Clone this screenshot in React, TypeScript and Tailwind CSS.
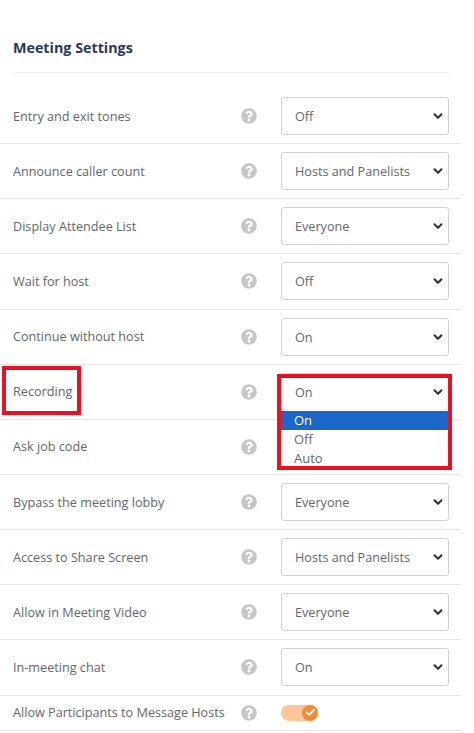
import { ChevronDown, Check } from 'lucide-react'
import { FaQuestionCircle } from 'react-icons/fa'

interface SettingRowProps {
  label: string
  value?: string
  open?: boolean
}

const rows: SettingRowProps[] = [
  { label: 'Entry and exit tones', value: 'Off' },
  { label: 'Announce caller count', value: 'Hosts and Panelists' },
  { label: 'Display Attendee List', value: 'Everyone' },
  { label: 'Wait for host', value: 'Off' },
  { label: 'Continue without host', value: 'On' },
  { label: 'Recording', value: 'On', open: true },
  { label: 'Ask job code' },
  { label: 'Bypass the meeting lobby', value: 'Everyone' },
  { label: 'Access to Share Screen', value: 'Hosts and Panelists' },
  { label: 'Allow in Meeting Video', value: 'Everyone' },
  { label: 'In-meeting chat', value: 'On' },
]

function SettingRow({ label, value, open }: SettingRowProps) {
  return (
    <div className="flex h-[55.15px] items-center border-b border-[#e6e6e6] pl-[13px] pr-[12px]">
      <div className="w-[228px] text-[12.65px] text-[#63676b]">{label}</div>
      <FaQuestionCircle className="h-4 w-4 text-[#c6c6c6]" />
      {value && (
        <div className="relative ml-6">
          <div className="flex h-[38px] w-[168px] items-center justify-between rounded-[3px] border border-[#d2d2d2] bg-white pl-[13px] pr-[3px] text-[12.65px] text-[#63676b]">
            <span className="pt-px">{value}</span>
            <ChevronDown className="h-[14px] w-[14px] text-[#333]" strokeWidth={3.5} />
          </div>
          {open && (
            <div className="absolute left-0 top-[37px] z-10 w-[167px] bg-white pt-px text-[13px] leading-[19px] text-[#63676b] shadow-[0_1px_3px_rgba(0,0,0,0.25)]">
              <div className="bg-[#1c66c9] pl-[13px] text-white">On</div>
              <div className="pl-[13px]">Off</div>
              <div className="pl-[13px]">Auto</div>
            </div>
          )}
        </div>
      )}
    </div>
  )
}

export default function App() {
  return (
    <div className="relative h-[733px] w-[474px] overflow-hidden bg-white font-['Open_Sans',sans-serif]">
      <div className="mx-[12px] flex h-[73px] w-[437px] items-end border-b border-[#f0f0f0] pb-[14px]">
        <h2 className="pl-px text-[14.3px] font-bold leading-[20px] text-[#2b3a55]">Meeting Settings</h2>
      </div>
      <div className="h-[16px]" />
      <div className="w-[461px]">
        {rows.map((row) => (
          <SettingRow key={row.label} {...row} />
        ))}
        <div className="flex h-[35px] items-center border-b border-[#e6e6e6] pl-[13px]">
          <div className="w-[228px] text-[12.65px] text-[#63676b]">Allow Participants to Message Hosts</div>
          <FaQuestionCircle className="h-4 w-4 text-[#c6c6c6]" />
          <div className="relative ml-6 h-4 w-[37px] rounded-full bg-[#fcc59a]">
            <div className="absolute right-0 top-0 flex h-4 w-4 items-center justify-center rounded-full bg-[#f58a33]">
              <Check className="h-[11px] w-[11px] text-white" strokeWidth={4} />
            </div>
          </div>
        </div>
      </div>
      {/* red annotation boxes */}
      <div className="absolute left-[2px] top-[366px] z-20 h-[49px] w-[79px] border-[4px] border-[#e81123]" />
      <div className="absolute left-[277px] top-[374px] z-20 h-[96px] w-[175px] border-[4px] border-[#e81123]" />
    </div>
  )
}
